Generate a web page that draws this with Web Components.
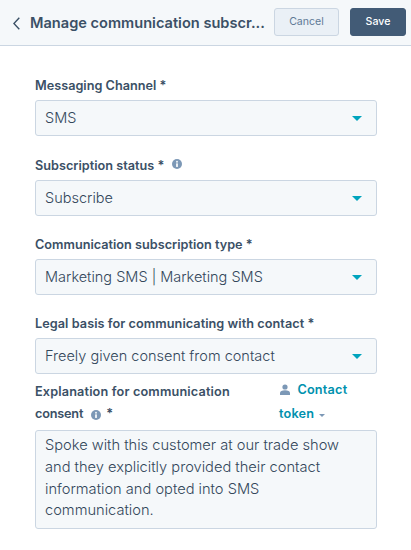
<!DOCTYPE html>
<html lang="en"><head><meta charset="utf-8"><title>Manage communication subscription</title>
<style>
html,body{margin:0;padding:0;background:#fff;height:550px;overflow:hidden}
body{font-family:Inter,"Liberation Sans",sans-serif;color:#33475b}
</style></head><body>
<app-header>Manage communication subscr...</app-header>
<form-panel>
  <form-select label="Messaging Channel *" value="SMS"></form-select>
  <form-select label="Subscription status *" value="Subscribe" info style="--top:21px"></form-select>
  <form-select label="Communication subscription type *" value="Marketing SMS | Marketing SMS" style="--top:20px"></form-select>
  <form-select label="Legal basis for communicating with contact *" value="Freely given consent from contact" style="--top:20px;--ls:.05px"></form-select>
  <form-textarea>Spoke with this customer at our trade show<br>and they explicitly provided their contact<br>information and opted into SMS<br>communication.</form-textarea>
</form-panel>
<script>
const INFO=`<svg width="10" height="10" viewBox="0 0 11 11" aria-hidden="true"><circle cx="5.5" cy="5.5" r="5.5" fill="#7c98b6"/><circle cx="5.5" cy="3" r="1.05" fill="#f5f8fa"/><rect x="4.5" y="4.7" width="2" height="4" rx=".4" fill="#f5f8fa"/></svg>`;
const BASE=`:host{box-sizing:border-box} *{box-sizing:border-box}`;
customElements.define('app-header',class extends HTMLElement{constructor(){super();this.attachShadow({mode:'open'}).innerHTML=`<style>${BASE}
:host{display:flex;align-items:center;height:46px;background:#f5f8fa;border-bottom:1px solid #cbd6e2;padding:0 5px 0 13px;font-family:Inter,sans-serif}
svg{flex:none;margin-right:10px;margin-top:2px}
.t{flex:1;min-width:0;white-space:nowrap;font-weight:600;font-size:14.6px;color:#3b5066;margin-top:1px}
.b{height:28px;border-radius:3px;font-size:10.6px;display:flex;align-items:center;justify-content:center;margin-top:-2px}
.c{width:65px;background:#eaf0f6;border:1px solid #cbd6e2;color:#5f7a96;margin-right:11px}
.s{width:56px;background:#425b76;border:1px solid #425b76;color:#fff;font-weight:500}
</style><svg width="7" height="13" viewBox="0 0 7 13"><path d="M6.3.8.9 6.5l5.4 5.7" fill="none" stroke="#3b5066" stroke-width="1.4"/></svg><span class="t"><slot></slot></span><span class="b c">Cancel</span><span class="b s">Save</span>`}});
customElements.define('form-panel',class extends HTMLElement{constructor(){super();this.attachShadow({mode:'open'}).innerHTML=`<style>${BASE}:host{display:block;padding:31px 34px 0 35px}</style><slot></slot>`}});
customElements.define('select-box',class extends HTMLElement{constructor(){super();this.attachShadow({mode:'open'}).innerHTML=`<style>${BASE}
:host{display:flex;align-items:center;justify-content:space-between;height:36px;background:#f5f8fa;border:1px solid #cbd6e2;border-radius:3px;padding:0 14px 0 9px;font-size:14.5px;font-weight:300;color:#33475b}
span{margin-top:-2px}
i{width:0;height:0;border-left:5px solid transparent;border-right:5px solid transparent;border-top:5px solid #00a4bd}
</style><span><slot></slot></span><i></i>`}});
customElements.define('form-select',class extends HTMLElement{connectedCallback(){if(this.shadowRoot)return;const info=this.hasAttribute('info');this.attachShadow({mode:'open'}).innerHTML=`<style>${BASE}
:host{display:block;margin-top:var(--top,0)}
.l{display:flex;align-items:center;height:18px;padding-bottom:2px;font-size:12.7px;font-weight:600;letter-spacing:var(--ls,0);color:#3b5066;margin-bottom:5px;white-space:nowrap}
svg{margin:-3px 0 0 8px}
</style><div class="l">${this.getAttribute('label')}${info?INFO:''}</div><select-box>${this.getAttribute('value')}</select-box>`}});
customElements.define('form-textarea',class extends HTMLElement{constructor(){super();this.attachShadow({mode:'open'}).innerHTML=`<style>${BASE}
:host{display:block;margin-top:6px}
.r{display:grid;grid-template-columns:244px 1fr;height:50px;font-size:12.7px;font-weight:600;line-height:22px;color:#3b5066}
.l{padding-top:1px;letter-spacing:.15px}.l span{letter-spacing:-.2px}.l svg{margin:0 5px 0 8px;vertical-align:-1.5px}
.k{color:#0091ae;letter-spacing:.2px;line-height:24px;margin-top:-2px}.k .u{vertical-align:-1px;margin-right:4px;margin-left:1px}
.k .d{display:inline-block;border-left:3px solid transparent;border-right:3px solid transparent;border-top:3px solid #7c98b6;margin-left:5px;vertical-align:1px}
.a{height:99px;background:#f5f8fa;border:1px solid #cbd6e2;border-radius:3px;padding:4px 9px;font-size:14.65px;font-weight:300;line-height:21.8px;color:#33475b}
</style><div class="r"><div class="l">Explanation for communication<br><span>consent</span>${INFO}*</div><div class="k"><svg class="u" width="10" height="11" viewBox="0 0 10 11"><circle cx="5" cy="3" r="2.6" fill="#7c98b6"/><path d="M0 11V9c0-2 2-2.8 5-2.8S10 7 10 9v2z" fill="#7c98b6"/></svg> Contact<br>token<i class="d"></i></div></div><div class="a"><slot></slot></div>`}});
</script>
</body></html>
